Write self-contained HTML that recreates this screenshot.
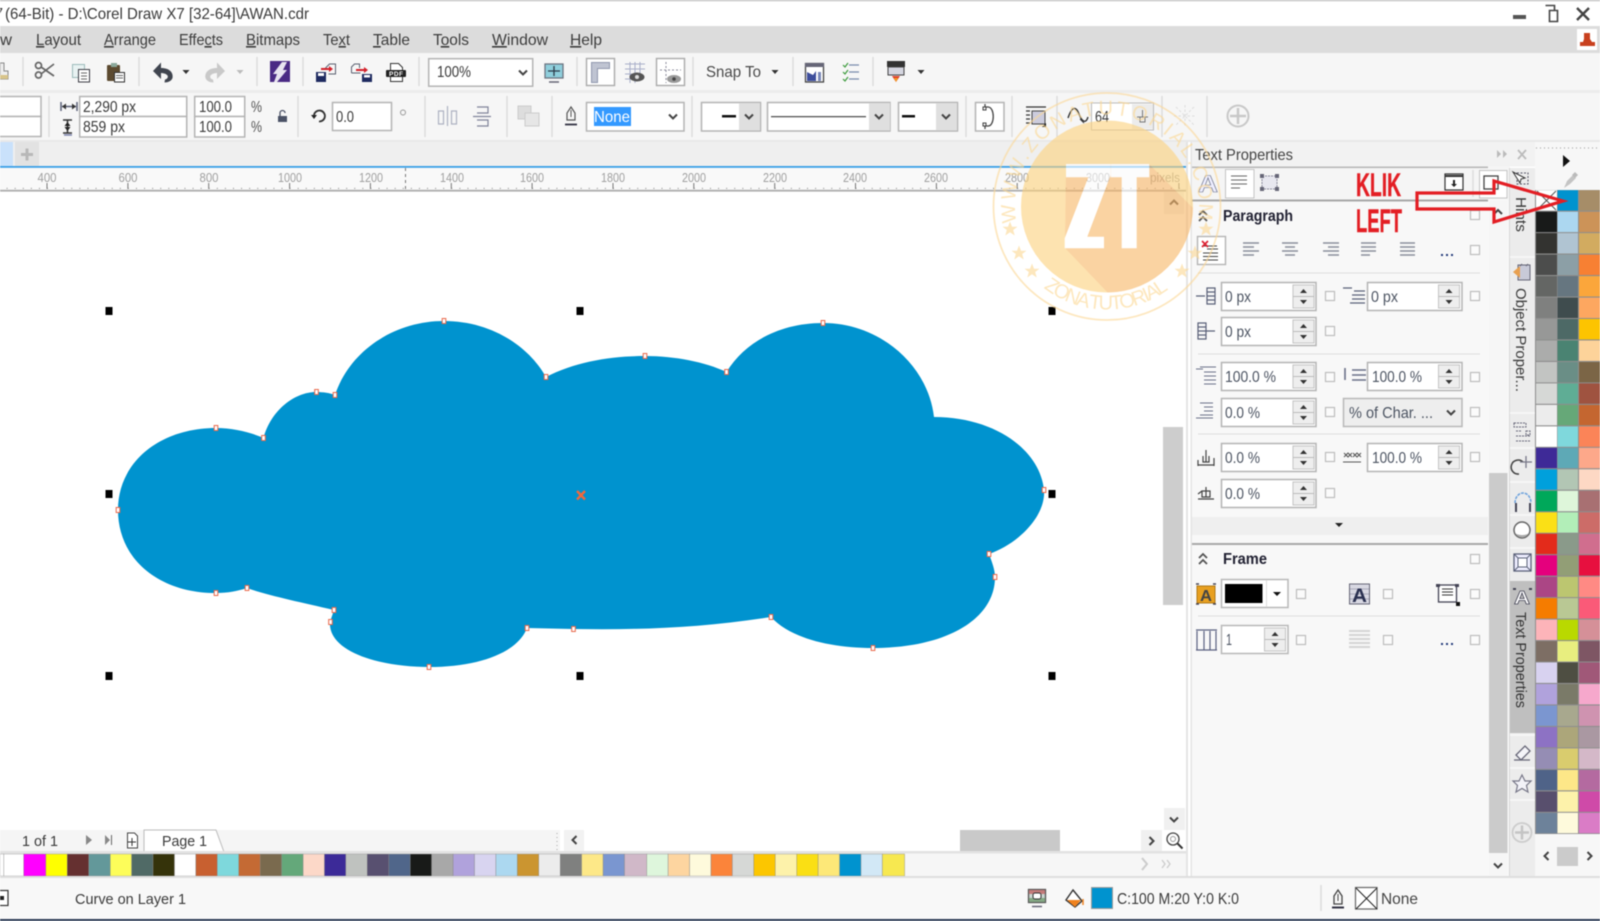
<!DOCTYPE html>
<html><head><meta charset="utf-8"><title>CorelDRAW X7</title>
<style>
html,body{margin:0;padding:0;background:#fff;width:1600px;height:921px;overflow:hidden}
svg{display:block;filter:blur(.45px)}
text{font-family:"Liberation Sans",sans-serif;fill:#3a3a3a;font-size:15px}
.m text{font-size:16px;fill:#3c3c3c}
.r text{font-size:13px;fill:#a0a0a0;text-anchor:middle}
.i{fill:#fff;stroke:#b4b4b4;stroke-width:1.5}
.s{stroke:#dcdcdc;stroke-width:1.5}
.v text{font-size:16px;fill:#4c5462}
</style></head><body>
<svg xmlns="http://www.w3.org/2000/svg" width="1600" height="921" viewBox="0 0 1600 921">
<defs>
<rect id="ck" x="-4.5" y="-4.5" width="9" height="9" fill="#fbfbfb" stroke="#bdbdbd" stroke-width="1.2"/>
<g id="sp"><rect width="21" height="23" fill="#eee" stroke="#c4c4c4"/><path d="M0,11.5H21" stroke="#bbb"/><path d="M10.5,4l3.500,4h-7zM10.5,19l-3.500,-4h7z" fill="#333"/></g>
<path id="ch" d="M-4,-2.5L0,1.5L4,-2.5" fill="none" stroke="#444" stroke-width="2"/>
<path id="dd" d="M-3.5,-2H3.5L0,2z" fill="#333"/>
<path id="und" d="M153,71L161,62.5V68C170,68 173.5,73 172.5,78C171.5,81 168,82.5 164.5,82.5L165,79.5C168,79 168.5,76 167,75C165.5,73.5 163,73 161,73V79Z"/>
<polygon id="st" points="0,-7.5 2,-2.3 7.5,-2.3 3.2,1 4.7,6.5 0,3.3 -4.7,6.5 -3.2,1 -7.5,-2.3 -2,-2.3" fill="#fcd892"/>
<g id="al"><path d="M0,0H16M0,4H11M0,8H16M0,12H11" stroke="#8a8f9c" stroke-width="1.4"/></g>
<g id="node"><rect x="-1.8" y="-2.5" width="3.6" height="5" fill="#fff" stroke="#e8684a" stroke-width="1"/></g>
<clipPath id="cc"><circle cx="1107" cy="206.5" r="86"/></clipPath>
</defs>

<!-- chrome backgrounds -->
<rect width="1600" height="921" fill="#fff"/>
<rect width="1600" height="1.2" fill="#bcbcbc"/>
<rect y="26" width="1600" height="27" fill="#dcdcdc"/>
<rect y="53" width="1600" height="37" fill="#f6f6f6"/>
<rect y="90" width="1600" height="3" fill="#ececec"/>
<rect y="93" width="1600" height="47" fill="#f6f6f6"/>
<rect y="140" width="1600" height="2.5" fill="#e8e8e8"/>
<rect y="142" width="1187" height="25" fill="#efefef"/>
<rect y="142" width="13" height="24.500" fill="#c9e1fb"/>
<rect x="15" y="142" width="24" height="24.500" fill="#e2e2e2"/>
<path d="M21,154.500H33M27,148.500V160.500" stroke="#b8b8b8" stroke-width="3"/>
<rect y="166" width="1187" height="1.800" fill="#3a9fe6"/>
<rect y="168" width="1187" height="22" fill="#f9f9f9"/>
<rect y="189.800" width="1187" height="1.800" fill="#adadad"/>

<!-- title bar -->
<text x="-5" y="19" style="font-size:16px" textLength="8" lengthAdjust="spacingAndGlyphs">7</text>
<text x="5" y="19" style="font-size:16px" textLength="304" lengthAdjust="spacingAndGlyphs">(64-Bit) - D:\Corel Draw X7 [32-64]\AWAN.cdr</text>
<rect x="1513" y="15" width="13" height="4" fill="#555"/>
<path d="M1545.500,5.500h9v5M1549.500,10.500h8v11h-8z" fill="none" stroke="#444" stroke-width="1.600"/>
<path d="M1577,8L1589,20M1589,8L1577,20" stroke="#444" stroke-width="2.400"/>

<!-- menu -->
<g class="m">
<text x="0" y="45" textLength="12" lengthAdjust="spacingAndGlyphs">w</text>
<text x="36" y="45" textLength="45" lengthAdjust="spacingAndGlyphs"><tspan text-decoration="underline">L</tspan>ayout</text>
<text x="104" y="45" textLength="52" lengthAdjust="spacingAndGlyphs"><tspan text-decoration="underline">A</tspan>rrange</text>
<text x="179" y="45" textLength="44" lengthAdjust="spacingAndGlyphs">Effe<tspan text-decoration="underline">c</tspan>ts</text>
<text x="246" y="45" textLength="54" lengthAdjust="spacingAndGlyphs"><tspan text-decoration="underline">B</tspan>itmaps</text>
<text x="323" y="45" textLength="27" lengthAdjust="spacingAndGlyphs">Te<tspan text-decoration="underline">x</tspan>t</text>
<text x="373" y="45" textLength="37" lengthAdjust="spacingAndGlyphs"><tspan text-decoration="underline">T</tspan>able</text>
<text x="433" y="45" textLength="36" lengthAdjust="spacingAndGlyphs">T<tspan text-decoration="underline">o</tspan>ols</text>
<text x="492" y="45" textLength="56" lengthAdjust="spacingAndGlyphs"><tspan text-decoration="underline">W</tspan>indow</text>
<text x="570" y="45" textLength="32" lengthAdjust="spacingAndGlyphs"><tspan text-decoration="underline">H</tspan>elp</text>
</g>
<rect x="1577" y="29" width="20" height="21" fill="#fff"/>
<path d="M1584,33h6v6l2,3h3v4h-15v-4h3l1,-3z" fill="#c8401e"/>

<!-- toolbar separators -->
<path class="s" d="M23,57V86M139,57V86M257,57V86M303,57V86M419,57V86M577,57V86M693,57V86M793,57V86M873,57V86"/>
<path d="M0,63h4v8h4v8h-8z" fill="#eee" stroke="#888"/><rect y="75" width="8" height="4" fill="#d8c48a"/>
<!-- scissors -->
<g fill="none" stroke="#666" stroke-width="1.700"><circle cx="38.500" cy="65.500" r="3"/><circle cx="38.500" cy="75" r="3"/><path d="M41,67L54,76M41,74L54,64"/></g>
<!-- copy -->
<rect x="72.500" y="64.500" width="12" height="13" fill="#e8f2f2" stroke="#9cbaba"/><rect x="78.500" y="69.500" width="11" height="12.500" fill="#fff" stroke="#3c3c44"/><path d="M81,73h6M81,76h6M81,79h6" stroke="#666"/>
<!-- paste -->
<rect x="107" y="65" width="13" height="16" rx="1" fill="#5c4a30"/><rect x="111" y="63" width="6" height="4" fill="#8aa89a"/><rect x="114.500" y="72.500" width="10" height="9.500" fill="#fff" stroke="#333"/><path d="M116,75.500h7M116,78h7" stroke="#666"/>
<!-- undo redo -->
<use href="#und" fill="#40454f"/>
<use href="#dd" x="186" y="72"/>
<use href="#und" fill="#c9c9c9" transform="translate(378,0) scale(-1,1)"/>
<use href="#dd" x="240" y="72" opacity=".3"/>
<!-- connect -->
<rect x="270" y="61" width="20" height="21" fill="#4a2a84"/><path d="M282,62h5l-4,8h4l-10,12h-3l3,-8h-4z" fill="#e8e4f0"/>
<!-- import export pdf -->
<path d="M325.500,68l4,-4h6v10h-7" fill="none" stroke="#5a6070"/><path d="M321,69h8" stroke="#d2202a" stroke-width="2"/><path d="M329,66l4,3l-4,3z" fill="#d2202a"/><rect x="316" y="72" width="10" height="10" fill="#1e2a60"/><rect x="318" y="73" width="6" height="3" fill="#fff"/>
<path d="M351.500,73v-6l3,-3h5v4" fill="none" stroke="#5a6070"/><path d="M351.500,73h9" stroke="#5a6070"/><path d="M356,70h8" stroke="#d2202a" stroke-width="2"/><path d="M364,67l4,3l-4,3z" fill="#d2202a"/><rect x="362" y="74" width="10" height="8" fill="#1e2a60"/><rect x="364" y="75" width="6" height="2.500" fill="#fff"/>
<path d="M390.500,63.500h8l4,4v14h-12z" fill="#fff" stroke="#333"/><rect x="386" y="70" width="20" height="7" rx="1" fill="#222"/><text x="389" y="76" style="font-size:6.500px;fill:#fff;font-weight:bold" textLength="14">PDF</text>
<!-- zoom combobox -->
<rect class="i" x="428.700" y="58.700" width="104" height="27.500"/>
<text x="437" y="77" style="font-size:16px" textLength="34" lengthAdjust="spacingAndGlyphs">100%</text>
<use href="#ch" x="523" y="73"/>
<rect x="545" y="64" width="18" height="14" fill="#8fcfdc" stroke="#6c7480" stroke-width="1.300"/><path d="M548,71h12M554,66v10" stroke="#2c3a48" stroke-width="1.300"/><path d="M549,82h10" stroke="#667" stroke-width="1.500"/>
<!-- view toggles -->
<rect x="586.500" y="58.500" width="28" height="27" fill="#fff" stroke="#aaa" stroke-width="1.400"/>
<path d="M591.500,62.500h18v6h-12v14h-6z" fill="#bfc4d2" stroke="#9098ae"/>
<path d="M625,64H645M625,69H645M625,74H640M625,79H636M630,62V83M635,62V83M640,62V76" stroke="#a8aec8"/><ellipse cx="637" cy="77" rx="7.500" ry="4.500" fill="#555"/><circle cx="637" cy="77" r="2" fill="#ddd"/>
<rect x="656.500" y="58.500" width="28" height="27" fill="#fff" stroke="#aaa" stroke-width="1.400"/>
<path d="M666,62V83M660,70H681" stroke="#889" stroke-dasharray="2 2"/><ellipse cx="674" cy="79" rx="7" ry="4" fill="#999"/><circle cx="674" cy="79" r="1.800" fill="#444"/>
<text x="706" y="77" style="font-size:16px;fill:#4a4a4a" textLength="55" lengthAdjust="spacingAndGlyphs">Snap To</text>
<use href="#dd" x="775" y="72"/>
<rect x="805.500" y="63.500" width="18" height="18.500" fill="#fff" stroke="#444" stroke-width="1.300"/><rect x="805" y="63" width="19" height="4" fill="#667"/><path d="M807,81v-9l6,3l3,-4v10z" fill="#3e4e9c"/><path d="M818,72h3v9h-3" fill="#7a88b8"/>
<path d="M849,65h10M849,72h10M849,79h10" stroke="#7a8aac" stroke-width="1.300"/><path d="M843,65l2,2l3,-4M843,72l2,2l3,-4M843,79l2,2l3,-4" stroke="#3b9a3b" fill="none" stroke-width="1.200"/>
<rect x="887" y="61" width="18" height="6" fill="#333"/><rect x="888" y="67" width="16" height="8" fill="#d5d6e0" stroke="#444"/><path d="M892,76h8l-4,6z" fill="#e0402a"/><path d="M894,78h4l-2,4z" fill="#f2a020"/>
<use href="#dd" x="921" y="72"/>

<!-- prop bar -->
<path class="s" d="M49,96V137M298,96V137M425,96V137M507,96V137M552,96V137M692,96V137M966,96V137M1012,96V137M1057,96V137M1162,96V137M1207,96V137"/>
<rect class="i" x="-2" y="96.500" width="43" height="20"/><rect class="i" x="-2" y="116.500" width="43" height="20"/>
<path d="M61,102v9M77,102v9M62,106.500H76" stroke="#5a6078" stroke-width="1.500"/><path d="M62,106.500l4,-3v6zM76,106.500l-4,-3v6z" fill="#333"/>
<path d="M63,120h9M63,133h9M67.500,120v13" stroke="#333" stroke-width="1.500"/><path d="M67.500,122l-3,4h6zM67.500,131l-3,-4h6z" fill="#222"/><path d="M64,135h8" stroke="#8088b0" stroke-width="1.500"/>
<rect class="i" x="79.700" y="96.500" width="107" height="20"/><rect class="i" x="79.700" y="116.500" width="107" height="20.500"/>
<rect class="i" x="194.700" y="96.500" width="50" height="20"/><rect class="i" x="194.700" y="116.500" width="50" height="20.500"/>
<text x="83" y="112" style="font-size:16px" textLength="53" lengthAdjust="spacingAndGlyphs">2,290 px</text>
<text x="83" y="132" style="font-size:16px" textLength="42" lengthAdjust="spacingAndGlyphs">859 px</text>
<text x="199" y="112" style="font-size:16px" textLength="33" lengthAdjust="spacingAndGlyphs">100.0</text>
<text x="199" y="132" style="font-size:16px" textLength="33" lengthAdjust="spacingAndGlyphs">100.0</text>
<text x="251" y="112" style="fill:#555;font-size:16px" textLength="11" lengthAdjust="spacingAndGlyphs">%</text>
<text x="251" y="132" style="fill:#555;font-size:16px" textLength="11" lengthAdjust="spacingAndGlyphs">%</text>
<path d="M278,116h9v6h-9z" fill="#4b5266"/><path d="M280,116v-3a2.500,2.500 0 0 1 5,0" stroke="#4b5266" fill="none" stroke-width="1.300"/>
<path d="M314,115a5.500,5.500 0 1 1 5,6.500" fill="none" stroke="#333" stroke-width="1.800"/><path d="M311,115h6l-3,4z" fill="#222"/>
<rect class="i" x="332.500" y="102.500" width="59" height="28"/>
<text x="336" y="122" style="font-size:16px" textLength="18" lengthAdjust="spacingAndGlyphs">0.0</text>
<circle cx="403" cy="112.500" r="2.500" fill="none" stroke="#999"/>
<path d="M438.500,111h5v13h-5zM451.500,111h5v13h-5zM447.500,106v20" fill="none" stroke="#aeb2c2" stroke-width="1.200"/>
<path d="M477,107h11v6h-11M477,120h11v6h-11M473,116.500H491" fill="none" stroke="#80849a" stroke-width="1.200"/>
<rect x="518" y="106" width="13" height="13" fill="#ddd" stroke="#ccc"/><rect x="525" y="113" width="14" height="13" fill="#e6e6e6" stroke="#ccc"/>
<path d="M571,107l4,6v7h-8v-7z" fill="none" stroke="#555" stroke-width="1.200"/><path d="M571,110v7" stroke="#555"/><path d="M565,124.500h12" stroke="#334" stroke-width="1.800"/>
<rect class="i" x="586.500" y="102.500" width="97.500" height="28.500"/>
<rect x="594" y="107" width="37" height="19" fill="#3399ff"/>
<text x="594" y="122" style="font-size:16px;fill:#fff" textLength="36" lengthAdjust="spacingAndGlyphs">None</text>
<use href="#ch" x="673" y="117"/>
<rect class="i" x="701.500" y="102.500" width="59" height="28.500"/><rect x="739" y="103" width="21" height="27.500" fill="#dfdfdf"/><rect x="722" y="115" width="14" height="2.500" fill="#111"/><use href="#ch" x="749" y="117"/>
<rect class="i" x="767.500" y="102.500" width="122.500" height="28.500"/><rect x="869" y="103" width="21" height="27.500" fill="#dfdfdf"/><rect x="771" y="116" width="95" height="1.300" fill="#555"/><use href="#ch" x="879" y="117"/>
<rect class="i" x="898.500" y="102.500" width="59" height="28.500"/><rect x="936" y="103" width="21" height="27.500" fill="#dfdfdf"/><rect x="902" y="115" width="13" height="2.500" fill="#111"/><use href="#ch" x="946" y="117"/>
<rect class="i" x="975.500" y="102.500" width="28.500" height="28.500"/><path d="M985,107h3c7,0 7,19 0,19h-3M985,104v5M985,124v5" fill="none" stroke="#444" stroke-width="1.300"/><rect x="983" y="107" width="3" height="3" fill="#eee" stroke="#444"/><rect x="983" y="123" width="3" height="3" fill="#eee" stroke="#444"/>
<path d="M1026,107H1046M1026,111h4M1026,115h4M1026,119h4M1026,123h4" stroke="#333" stroke-width="1.200"/><rect x="1032" y="111" width="13" height="13" fill="#ccd" stroke="#444"/><path d="M1046,127v-4l-4,4z" fill="#111"/>
<path d="M1068,118c4,-12 8,-12 11,-4s7,10 9,3" fill="none" stroke="#333" stroke-width="1.400"/><path d="M1080,119l4,4" stroke="#333"/>
<rect x="1091.500" y="103" width="62" height="27" fill="#fff" stroke="#bbb"/><rect x="1132" y="104" width="21" height="25" fill="#ececec"/><path d="M1137,117h11M1142.500,110v7M1140,117v5h5v-5" fill="none" stroke="#777"/>
<text x="1095" y="122" textLength="14" lengthAdjust="spacingAndGlyphs" style="font-size:16px">64</text>
<path d="M1176,107l18,18M1194,107l-18,18M1185,105v22M1174,116h22" stroke="#ddd" stroke-dasharray="2.500 2"/>
<circle cx="1238" cy="116" r="10.500" fill="none" stroke="#c8c8c8" stroke-width="2"/><path d="M1230,116h16M1238,108v16" stroke="#c8c8c8" stroke-width="2.500"/>

<!-- ruler -->
<line x1="6.600" x2="1186" y1="188.400" y2="188.400" stroke="#888" stroke-dasharray="1 7.085"/>
<path d="M47,183v6M127.900,183v6M208.700,183v6M289.600,183v6M370.400,183v6M451.300,183v6M532.100,183v6M613,183v6M693.800,183v6M774.700,183v6M855.500,183v6M936.400,183v6M1017.200,183v6M1098.100,183v6M1178.900,183v6" stroke="#777"/>
<path d="M405.500,168V190" stroke="#777" stroke-dasharray="3 3"/>
<g class="r">
<text x="47" y="182" textLength="19" lengthAdjust="spacingAndGlyphs">400</text><text x="128" y="182" textLength="19" lengthAdjust="spacingAndGlyphs">600</text><text x="209" y="182" textLength="19" lengthAdjust="spacingAndGlyphs">800</text><text x="290" y="182" textLength="24" lengthAdjust="spacingAndGlyphs">1000</text><text x="371" y="182" textLength="24" lengthAdjust="spacingAndGlyphs">1200</text><text x="452" y="182" textLength="24" lengthAdjust="spacingAndGlyphs">1400</text><text x="532" y="182" textLength="24" lengthAdjust="spacingAndGlyphs">1600</text><text x="613" y="182" textLength="24" lengthAdjust="spacingAndGlyphs">1800</text><text x="694" y="182" textLength="24" lengthAdjust="spacingAndGlyphs">2000</text><text x="775" y="182" textLength="24" lengthAdjust="spacingAndGlyphs">2200</text><text x="855" y="182" textLength="24" lengthAdjust="spacingAndGlyphs">2400</text><text x="936" y="182" textLength="24" lengthAdjust="spacingAndGlyphs">2600</text><text x="1017" y="182" textLength="24" lengthAdjust="spacingAndGlyphs">2800</text><text x="1098" y="182" textLength="24" lengthAdjust="spacingAndGlyphs">3000</text><text x="1165" y="182" textLength="30" lengthAdjust="spacingAndGlyphs">pixels</text>
</g>

<!-- cloud -->
<path fill="#0093cf" d="M444,321C490,321 528,345 546,377C575,362 610,356 645,356C675,356 705,362 726.500,372C745,342 780,323 823,323C880,323 928,365 934,417C995,417 1040,450 1044,490C1046,515 1020,543 989,554C992,562 995,570 995,577C995,620 945,648 873,648C830,648 790,638 771,617C700,628 640,630 573,629L527,628C518,652 480,667 429,667C380,667 328,652 330,622L334,610C300,602 270,596 247,588C238,591 228,593 216,593C160,593 118,560 118,510C118,462 160,428 216,428C233,428 250,432 263.500,438C271,410 295,392 316,392C323,392 330,393 335,395C350,350 395,321 444,321Z"/>
<g>
<use href="#node" x="444" y="321"/><use href="#node" x="546" y="377"/><use href="#node" x="645" y="356"/><use href="#node" x="726.500" y="372"/><use href="#node" x="823" y="323"/><use href="#node" x="1044" y="490"/><use href="#node" x="989" y="554"/><use href="#node" x="995" y="577"/><use href="#node" x="873" y="648"/><use href="#node" x="771" y="617"/><use href="#node" x="573.500" y="629"/><use href="#node" x="527" y="628"/><use href="#node" x="429" y="667"/><use href="#node" x="330.500" y="622"/><use href="#node" x="334" y="610"/><use href="#node" x="247" y="588"/><use href="#node" x="216" y="593"/><use href="#node" x="118" y="510"/><use href="#node" x="216" y="428"/><use href="#node" x="263.500" y="438"/><use href="#node" x="316.500" y="392"/><use href="#node" x="335" y="395"/>
</g>
<path d="M577,491l8,8.500M585,491l-8,8.500" stroke="#f0683c" stroke-width="2.400"/>
<g fill="#000"><rect x="105.500" y="307" width="7" height="8"/><rect x="576.500" y="307" width="7" height="8"/><rect x="1048.500" y="307" width="7" height="8"/><rect x="105.500" y="490" width="7" height="8"/><rect x="1048.500" y="490" width="7" height="8"/><rect x="105.500" y="672" width="7" height="8"/><rect x="576.500" y="672" width="7" height="8"/><rect x="1048.500" y="672" width="7" height="8"/></g>

<!-- canvas scrollbars -->
<rect x="1164" y="192" width="20" height="22" fill="#f0f0f0"/><use href="#ch" x="1174" y="204" transform="rotate(180 1174 203)"/>
<rect x="1163" y="427" width="20" height="178" fill="#cdcdcd"/>
<rect x="1164" y="808" width="21" height="22" fill="#f0f0f0"/><use href="#ch" x="1174" y="820"/>

<!-- page bar -->
<rect y="830" width="560" height="21" fill="#f5f5f5"/>
<text x="22" y="846" textLength="36" lengthAdjust="spacingAndGlyphs">1 of 1</text>
<path d="M86,835l6,5l-6,5zM105,835l5,5l-5,5z" fill="#888"/><path d="M111.500,835v10" stroke="#666"/>
<path d="M127.500,833h7l3,3v12h-10z" fill="#fff" stroke="#444"/><path d="M132,838v8M128,842h8" stroke="#333"/>
<path d="M144,852V830H216l8,22" fill="#fff" stroke="#bbb"/>
<text x="162" y="846" textLength="45" lengthAdjust="spacingAndGlyphs">Page 1</text>
<path d="M557,833v17" stroke="#aaa" stroke-dasharray="1 3"/>
<rect x="564" y="830" width="20" height="21" fill="#f2f2f2"/><use href="#ch" x="574" y="840" transform="rotate(90 574 840)"/>
<rect x="960" y="830" width="100" height="21" fill="#c9c9c9"/>
<rect x="1141" y="830" width="21" height="21" fill="#f0f0f0"/><use href="#ch" x="1152" y="841" transform="rotate(-90 1152 841)"/>
<circle cx="1173" cy="839" r="6" fill="#fff" stroke="#444" stroke-width="1.300"/><circle cx="1173" cy="839" r="2.500" fill="none" stroke="#999"/><path d="M1177.500,843.500l5,5" stroke="#333" stroke-width="2"/>

<!-- colour bar -->
<rect y="851" width="1187" height="2.500" fill="#e2e2e2"/>
<rect y="853.500" width="1187" height="22.500" fill="#f6f6f6"/>
<g stroke="#888" stroke-width=".4">
<rect x="0" y="854" width="3.800" height="22" fill="#fff"/><rect x="3.800" y="854" width="20" height="22" fill="#fff"/><rect x="23.700" y="854" width="22.200" height="22" fill="#ff00ff"/><rect x="45.900" y="854" width="21.500" height="22" fill="#ffff00"/><rect x="67.300" y="854" width="21.500" height="22" fill="#653030"/><rect x="88.800" y="854" width="21.400" height="22" fill="#63989a"/><rect x="110.200" y="854" width="21.400" height="22" fill="#fdfd5a"/><rect x="131.600" y="854" width="21.400" height="22" fill="#506a66"/><rect x="153" y="854" width="21.500" height="22" fill="#35330a"/><rect x="174.500" y="854" width="21.400" height="22" fill="#fff"/><rect x="195.900" y="854" width="21.400" height="22" fill="#c86030"/><rect x="217.300" y="854" width="21.500" height="22" fill="#7ed8dc"/><rect x="238.800" y="854" width="21.400" height="22" fill="#c46a34"/><rect x="260.200" y="854" width="21.400" height="22" fill="#7a6a4e"/><rect x="281.600" y="854" width="21.500" height="22" fill="#64a87a"/><rect x="303.100" y="854" width="21.400" height="22" fill="#fcd8c8"/><rect x="324.500" y="854" width="21.400" height="22" fill="#3c2a98"/><rect x="345.900" y="854" width="21.400" height="22" fill="#bfc2bf"/><rect x="367.300" y="854" width="21.500" height="22" fill="#585070"/><rect x="388.800" y="854" width="21.400" height="22" fill="#50668a"/><rect x="410.200" y="854" width="21.400" height="22" fill="#181a18"/><rect x="431.600" y="854" width="21.500" height="22" fill="#a8a8a8"/><rect x="453.100" y="854" width="21.400" height="22" fill="#b0a2dc"/><rect x="474.500" y="854" width="21.400" height="22" fill="#d8d4f0"/><rect x="495.900" y="854" width="21.500" height="22" fill="#acd8f0"/><rect x="517.400" y="854" width="21.400" height="22" fill="#cb9530"/><rect x="538.800" y="854" width="21.400" height="22" fill="#ececec"/><rect x="560.200" y="854" width="21.400" height="22" fill="#7f807f"/><rect x="581.600" y="854" width="21.500" height="22" fill="#fde888"/><rect x="603.100" y="854" width="21.400" height="22" fill="#7a96d0"/><rect x="624.500" y="854" width="22.200" height="22" fill="#d0b8c8"/><rect x="646.700" y="854" width="21.400" height="22" fill="#def6dc"/><rect x="668.100" y="854" width="21.500" height="22" fill="#fdd5a0"/><rect x="689.600" y="854" width="21.400" height="22" fill="#fefadc"/><rect x="711" y="854" width="21.400" height="22" fill="#fb843a"/><rect x="732.400" y="854" width="21.400" height="22" fill="#d6d8d6"/><rect x="753.800" y="854" width="21.500" height="22" fill="#fcc600"/><rect x="775.300" y="854" width="21.400" height="22" fill="#fdf2aa"/><rect x="796.700" y="854" width="21.400" height="22" fill="#fadf14"/><rect x="818.100" y="854" width="21.500" height="22" fill="#fde878"/><rect x="839.600" y="854" width="21.400" height="22" fill="#0093cf"/><rect x="861" y="854" width="21.400" height="22" fill="#d2e8f6"/><rect x="882.400" y="854" width="22.200" height="22" fill="#f7e850"/>
</g>
<path d="M1142,858l5,6l-5,6" fill="none" stroke="#ccc" stroke-width="2"/>
<path d="M1162,860l3,4l-3,4M1167,860l3,4l-3,4" fill="none" stroke="#ccc" stroke-width="1.300"/>

<!-- status -->
<rect y="876" width="1600" height="43" fill="#f8f8f8"/>
<rect y="876" width="1600" height="2" fill="#dedede"/>
<rect y="919" width="1600" height="2" fill="#2b3a55"/>
<rect x="-3" y="890.500" width="11" height="15" fill="#fff" stroke="#333" stroke-width="1.200"/><rect x="0" y="896" width="4" height="4" fill="#222"/>
<text x="75" y="904" textLength="111" lengthAdjust="spacingAndGlyphs">Curve on Layer 1</text>
<rect x="1028.500" y="889.500" width="17" height="13" fill="#c9d5d0" stroke="#555" stroke-width="1.300"/><rect x="1029" y="890" width="16" height="4" fill="#c47b7b"/><rect x="1029" y="898" width="16" height="4" fill="#84a884"/><rect x="1033" y="893" width="8" height="6" rx="2" fill="#fff" stroke="#333"/><path d="M1032,906.500h10" stroke="#667" stroke-width="1.500"/>
<path d="M1073,890l9,11l-7,6l-9,-7z" fill="#fff" stroke="#333" stroke-width="1.400"/><path d="M1067,900h14l-6,7z" fill="#f0821e"/><path d="M1083,899v6" stroke="#f0821e" stroke-width="1.500"/>
<rect x="1091.500" y="887.500" width="21" height="21" fill="#0093cf" stroke="#9a9a9a"/>
<text x="1117" y="904" style="font-size:16px" textLength="122" lengthAdjust="spacingAndGlyphs">C:100 M:20 Y:0 K:0</text>
<path class="s" d="M1321,885V911"/>
<path d="M1338,890l4,6v8h-8v-8z" fill="none" stroke="#444" stroke-width="1.300"/><path d="M1338,894v7" stroke="#444"/><path d="M1332,907.500h12" stroke="#334" stroke-width="2"/>
<rect x="1355.500" y="887.500" width="21.500" height="21.500" fill="#fff" stroke="#666" stroke-width="1.200"/><path d="M1356,888L1377,909M1377,888L1356,909" stroke="#222"/>
<text x="1381" y="904" style="font-size:16px;fill:#444" textLength="37" lengthAdjust="spacingAndGlyphs">None</text>

<!-- panel -->
<rect x="1186" y="142" width="6.500" height="734" fill="#e4e4e4"/><rect x="1188" y="142" width="2.500" height="734" fill="#fff"/>
<rect x="1192" y="142" width="318" height="734" fill="#f8f8f8"/>
<rect x="1192" y="167" width="318" height="33" fill="#f5f5f5"/>
<rect x="1192" y="166.500" width="296" height="1.600" fill="#b8b8b8"/>
<rect x="1192" y="199.500" width="296" height="2" fill="#a8a8a8"/>
<text x="1198" y="192" style="font-size:24px;fill:#eef;stroke:#6a7088;stroke-width:.6;font-weight:bold" textLength="20" lengthAdjust="spacingAndGlyphs">A</text>
<rect x="1225.500" y="169.500" width="28.500" height="28.500" fill="#fff" stroke="#c4c4c4"/>
<path d="M1231,176h16M1231,180h16M1231,184h16M1231,188h9" stroke="#666" stroke-width="1.100"/>
<rect x="1262" y="176" width="15" height="13" fill="#e8e8f0" stroke="#889" stroke-dasharray="2 1"/>
<path d="M1260,174h4v4h-4zM1275,174h4v4h-4zM1260,187h4v4h-4zM1275,187h4v4h-4z" fill="#667"/>
<path d="M1445,174h18v16h-18z" fill="#fff" stroke="#333" stroke-width="1.200"/><path d="M1445,176h18" stroke="#333" stroke-width="2"/><path d="M1454,180v6" stroke="#222" stroke-width="2"/><path d="M1451,184h6l-3,3z" fill="#222"/>
<path class="s" d="M1473,170V197"/>
<rect x="1479.500" y="170.500" width="27.500" height="27.500" fill="#fff" stroke="#c4c4c4"/><rect x="1484" y="176" width="14" height="13" fill="#fff" stroke="#444" stroke-width="1.300"/>

<!-- Paragraph -->
<path d="M1199,215l4,-4l4,4M1199,221l4,-4l4,4" fill="none" stroke="#555" stroke-width="1.800"/>
<text x="1223" y="221" style="font-size:16px;font-weight:bold;fill:#223" textLength="70" lengthAdjust="spacingAndGlyphs">Paragraph</text>
<use href="#ck" x="1475" y="215"/>
<!-- align -->
<rect x="1197.500" y="236.500" width="28" height="28" fill="#fff" stroke="#b4b4b4" stroke-width="1.400"/>
<path d="M1203,246h14M1207,249h11M1203,253h15M1203,256.500h15M1203,260h15" stroke="#444" stroke-width="1.100"/>
<path d="M1202,241l6,6M1208,241l-6,6" stroke="#d23" stroke-width="1.700"/>
<use href="#al" x="1243" y="243"/>
<path d="M1282,243h16M1285,247h10M1282,251h16M1285,255h10M1323,243h16M1328,247h11M1323,251h16M1328,255h11" stroke="#8a8f9c" stroke-width="1.400"/>
<path d="M1361,243h15M1361,247h15M1361,251h15M1361,255h9M1400,243h15M1400,247h15M1400,251h15M1400,255h15" stroke="#8a8f9c" stroke-width="1.400"/>
<path d="M1441,255h2M1446,255h2M1451,255h2" stroke="#223a7a" stroke-width="2"/>
<use href="#ck" x="1475" y="250"/>
<path stroke="#dcdcdc" d="M1198,273H1480M1198,354H1480M1198,434H1480M1198,616H1480"/>
<g class="v">
<!-- row1 -->
<rect class="i" x="1221.500" y="282.500" width="94.500" height="28"/><use href="#sp" x="1293" y="285"/><text x="1225" y="302" textLength="26" lengthAdjust="spacingAndGlyphs">0 px</text><use href="#ck" x="1330" y="296"/>
<rect class="i" x="1367.500" y="282.500" width="94.500" height="28"/><use href="#sp" x="1438.500" y="285"/><text x="1371" y="302" textLength="27" lengthAdjust="spacingAndGlyphs">0 px</text><use href="#ck" x="1475" y="296"/>
<!-- row2 -->
<rect class="i" x="1221.500" y="317.500" width="94.500" height="28"/><use href="#sp" x="1293" y="320"/><text x="1225" y="337" textLength="26" lengthAdjust="spacingAndGlyphs">0 px</text><use href="#ck" x="1330" y="331"/>
<!-- row3 -->
<rect class="i" x="1221.500" y="362.500" width="94.500" height="28"/><use href="#sp" x="1293" y="365"/><text x="1225" y="382" textLength="51" lengthAdjust="spacingAndGlyphs">100.0 %</text><use href="#ck" x="1330" y="377"/>
<rect class="i" x="1367.500" y="362.500" width="94.500" height="28"/><use href="#sp" x="1438.500" y="365"/><text x="1372" y="382" textLength="50" lengthAdjust="spacingAndGlyphs">100.0 %</text><use href="#ck" x="1475" y="377"/>
<!-- row4 -->
<rect class="i" x="1221.500" y="398.500" width="94.500" height="28"/><use href="#sp" x="1293" y="401"/><text x="1225" y="418" textLength="35" lengthAdjust="spacingAndGlyphs">0.0 %</text><use href="#ck" x="1330" y="412"/>
<rect x="1343.500" y="398.500" width="118.500" height="28" fill="#eee" stroke="#b8b8b8" stroke-width="1.500"/><text x="1349" y="418" textLength="84" lengthAdjust="spacingAndGlyphs">% of Char. ...</text><use href="#ch" x="1451" y="413"/><use href="#ck" x="1475" y="412"/>
<!-- row5 -->
<rect class="i" x="1221.500" y="443.500" width="94.500" height="28"/><use href="#sp" x="1293" y="446"/><text x="1225" y="463" textLength="35" lengthAdjust="spacingAndGlyphs">0.0 %</text><use href="#ck" x="1330" y="457"/>
<rect class="i" x="1367.500" y="443.500" width="94.500" height="28"/><use href="#sp" x="1438.500" y="446"/><text x="1372" y="463" textLength="50" lengthAdjust="spacingAndGlyphs">100.0 %</text><use href="#ck" x="1475" y="457"/>
<!-- row6 -->
<rect class="i" x="1221.500" y="479.500" width="94.500" height="28"/><use href="#sp" x="1293" y="482"/><text x="1225" y="499" textLength="35" lengthAdjust="spacingAndGlyphs">0.0 %</text><use href="#ck" x="1330" y="493"/>
</g>
<!-- paragraph row icons -->
<path d="M1196,296h9M1207,288v16h8v-16zM1207,292h8M1207,296h8M1207,300h8" fill="none" stroke="#5a6078" stroke-width="1.200"/>
<path d="M1343,288h9M1354,291h11M1352,295h13M1352,299h13M1350,303h15" fill="none" stroke="#5a6078" stroke-width="1.200"/>
<path d="M1198,323v16h8v-16zM1198,327h8M1198,331h8M1198,335h8M1206,331h9" fill="none" stroke="#5a6078" stroke-width="1.200"/>
<path d="M1196,369h7M1200,367h16M1204,372h12M1204,376h12M1204,380h12M1204,384h12" fill="none" stroke="#6a7088" stroke-width="1.100"/>
<path d="M1345,368v12M1352,370h14M1352,375h14M1352,380h14" fill="none" stroke="#6a7088" stroke-width="1.600"/>
<path d="M1200,403h13M1204,407h9M1204,411h9M1200,415h13M1196,418h17" fill="none" stroke="#6a7088" stroke-width="1.100"/>
<path d="M1198,465h16M1198,460v6M1214,458v8M1203,456v6h6v-6M1206,450v12" fill="none" stroke="#444" stroke-width="1.200"/>
<path d="M1344,453l4,4l4,-4M1353,453l4,4l4,-4M1344,457l4,-4l4,4M1353,457l4,-4l4,4M1343,462h18" fill="none" stroke="#555" stroke-width="1"/>
<path d="M1198,499h16M1202,491h8v6h-8zM1206,487v10M1198,494l4,-3" fill="none" stroke="#444" stroke-width="1.200"/>

<rect x="1192" y="517" width="296" height="18" fill="#efefef"/>
<path d="M1335,523h8l-4,4z" fill="#222"/>
<rect x="1192" y="543" width="296" height="2" fill="#a8a8a8"/>
<!-- Frame -->
<path d="M1199,558l4,-4l4,4M1199,564l4,-4l4,4" fill="none" stroke="#555" stroke-width="1.800"/>
<text x="1223" y="564" style="font-size:16px;font-weight:bold;fill:#223" textLength="44" lengthAdjust="spacingAndGlyphs">Frame</text>
<use href="#ck" x="1475" y="559"/>
<rect x="1197" y="586" width="18" height="17" fill="#e8a020" stroke="#b07818"/>
<text x="1200" y="601" style="font-size:16px;font-weight:bold;fill:#444" textLength="12" lengthAdjust="spacingAndGlyphs">A</text>
<path d="M1196,584h3M1213,584h3M1196,604h3M1213,604h3" stroke="#445" stroke-width="1.500"/>
<rect x="1221.500" y="579.500" width="66.500" height="28" fill="#fff" stroke="#b8b8b8" stroke-width="1.500"/><rect x="1225" y="584" width="37.500" height="19" fill="#000"/><path d="M1266.500,580v27" stroke="#ddd"/><path d="M1273,592h8l-4,4z" fill="#111"/>
<use href="#ck" x="1301" y="594"/>
<rect x="1349.500" y="584" width="20" height="20" fill="#d8d8e2" stroke="#667"/><path d="M1350,589h19M1350,594h19M1350,599h19" stroke="#aab"/>
<text x="1352" y="602" style="font-size:19px;font-weight:bold;fill:#2a3050" textLength="15" lengthAdjust="spacingAndGlyphs">A</text>
<use href="#ck" x="1388" y="594"/>
<rect x="1438.500" y="585" width="18" height="17" fill="#fff" stroke="#445" stroke-width="1.300"/><path d="M1442,589h11M1442,592h11M1442,595h11" stroke="#333"/><path d="M1456,602h4v4h-4z" fill="#111"/><path d="M1436,584h4v3h-4zM1455,584h4v3h-4z" fill="#445"/>
<use href="#ck" x="1475" y="594"/>
<path d="M1197,631V650M1204,631V650M1210,631V650M1216,631V650M1196,630H1217M1196,650H1217" stroke="#5a6080" stroke-width="1.200"/>
<rect x="1221.500" y="625.500" width="66.500" height="28" fill="#fff" stroke="#b8b8b8" stroke-width="1.500"/><use href="#sp" x="1264.500" y="628"/>
<text x="1226" y="645" style="font-size:16px;fill:#4c5462" textLength="6" lengthAdjust="spacingAndGlyphs">1</text>
<use href="#ck" x="1301" y="640"/>
<path d="M1349,631h21M1349,635h21M1349,639h21M1349,643h21M1349,647h21" stroke="#d4d4d4" stroke-width="2"/>
<use href="#ck" x="1388" y="640"/>
<path d="M1441,644h2M1446,644h2M1451,644h2" stroke="#223a7a" stroke-width="2"/>
<use href="#ck" x="1475" y="640"/>

<!-- panel scrollbar -->
<rect x="1489" y="201" width="18.500" height="675" fill="#f6f6f6"/>
<rect x="1489" y="473" width="18.500" height="380" fill="#cbcbcb"/>
<use href="#ch" x="1498" y="866"/>
<path d="M1494,214l4,-4l4,4" fill="none" stroke="#444" stroke-width="2"/>

<!-- docker strip -->
<rect x="1509" y="168" width="26" height="708" fill="#ececec"/>
<rect x="1192" y="142" width="343" height="24.500" fill="#f2f2f2"/>
<text x="1195" y="160" style="font-size:16px;fill:#444" textLength="98" lengthAdjust="spacingAndGlyphs">Text Properties</text>
<path d="M1497,150l4,4l-4,4zM1503,150l4,4l-4,4z" fill="#bbb"/>
<path d="M1518,150l8,9M1526,150l-8,9" stroke="#bbb" stroke-width="1.800"/>
<rect x="1509" y="581" width="26" height="152" fill="#bfbfbf"/>
<path d="M1509,257H1535M1509,413H1535M1509,448H1535M1509,482H1535M1509,515H1535M1509,548H1535M1509,735H1535M1509,768H1535M1509,800H1535" stroke="#fafafa" stroke-width="1.500"/>
<path d="M1509.500,168V876" stroke="#d8d8d8"/>
<rect x="1517" y="173" width="11" height="11" fill="none" stroke="#556" stroke-dasharray="2 1.500"/><path d="M1513,172l7,11l1,-4l4,-1z" fill="#fff" stroke="#333"/>
<text transform="translate(1516,197) rotate(90)" textLength="35" lengthAdjust="spacingAndGlyphs">Hints</text>
<rect x="1518" y="265" width="12" height="15" fill="#c8cad8" stroke="#667"/><path d="M1513,272l7,-6v12z" fill="#e8a050"/><path d="M1520,266l2,-2M1526,266l2,-2" stroke="#667"/>
<text transform="translate(1516,288) rotate(90)" textLength="104" lengthAdjust="spacingAndGlyphs">Object Proper...</text>
<path d="M1514,423h12v4h-12zM1516,431h6M1516,436h14M1516,441h14M1526,431h4v4h-4z" fill="none" stroke="#667" stroke-dasharray="2 1"/>
<path d="M1523,462a7,7 0 1 0 -4,12" fill="none" stroke="#444" stroke-width="1.500"/><path d="M1526,456v12M1520,462h12" stroke="#778" stroke-width="1.300"/>
<path d="M1515,503a8,10 0 0 1 16,0" fill="none" stroke="#6aa0dc" stroke-width="1.500" stroke-dasharray="3 1"/><path d="M1516,503v9M1530,503v9" stroke="#445" stroke-width="2"/>
<circle cx="1522" cy="530" r="8" fill="#fff" stroke="#666" stroke-width="1.500"/><path d="M1515,533a8,8 0 0 0 14,0a8,4 0 0 1 -14,0" fill="#aaa"/>
<rect x="1514" y="554" width="17" height="17" fill="#eef" stroke="#5a6078" stroke-width="1.300"/><rect x="1518" y="558" width="9" height="9" fill="#fff" stroke="#5a6078"/><path d="M1514,554l4,4M1531,554l-4,4M1514,571l4,-4M1531,571l-4,-4" stroke="#5a6078"/>
<text x="1514" y="604" style="font-size:18px;font-weight:bold;fill:#fff;stroke:#445;stroke-width:.7" textLength="16" lengthAdjust="spacingAndGlyphs">A</text>
<path d="M1513,589h19" stroke="#445" stroke-dasharray="3 13" stroke-width="2"/>
<text transform="translate(1516,612) rotate(90)" style="fill:#333" textLength="96" lengthAdjust="spacingAndGlyphs">Text Properties</text>
<path d="M1516,755l9,-9l5,5l-9,9zM1514,760h16" fill="#f4f4f8" stroke="#667" stroke-width="1.300"/>
<polygon points="1522,775 1525,781 1531,781 1526.500,785.500 1528,792 1522,788.500 1516,792 1517.500,785.500 1513,781 1519,781" fill="#f2f2f8" stroke="#778" stroke-width="1.200"/>
<circle cx="1522" cy="832.500" r="9.500" fill="none" stroke="#ccc" stroke-width="1.800"/><path d="M1515,832.500h14M1522,825.500v14" stroke="#c4c4c4" stroke-width="2.500"/>

<!-- palette -->
<rect x="1535" y="142" width="65" height="48" fill="#f7f7f7"/>
<path d="M1536,148H1600" stroke="#999" stroke-dasharray="1 3"/>
<path d="M1563,155l7,6l-7,6z" fill="#111"/>
<path d="M1564,188l3,-7l6,-6l3,3l-6,6z" fill="#c4c4c4"/><path d="M1572,175l3,-3l3,3l-3,3z" fill="#bbb"/>
<rect x="1535" y="190" width="65" height="644" fill="#8e8e8e"/>
<rect x="1535" y="834" width="65" height="42" fill="#f7f7f7"/>
<use href="#ch" x="1546" y="856" transform="rotate(90 1546 856)"/>
<rect x="1557" y="847" width="21" height="19" fill="#cbcbcb"/>
<use href="#ch" x="1590" y="856" transform="rotate(-90 1590 856)"/>

<rect x="1536" y="190.200" width="21" height="20.400" fill="#fff"/><path d="M1537,191L1556,210M1556,191L1537,210" stroke="#555"/><rect x="1557.500" y="190.200" width="20.500" height="20.400" fill="#0093cf"/><rect x="1579" y="190.200" width="21" height="20.400" fill="#a68d68"/>
<rect x="1536" y="211.700" width="21" height="20.400" fill="#181a19"/><rect x="1557.500" y="211.700" width="20.500" height="20.400" fill="#acd7f0"/><rect x="1579" y="211.700" width="21" height="20.400" fill="#cc9358"/>
<rect x="1536" y="233.100" width="21" height="20.400" fill="#333330"/><rect x="1557.500" y="233.100" width="20.500" height="20.400" fill="#b0c4d2"/><rect x="1579" y="233.100" width="21" height="20.400" fill="#d2ab60"/>
<rect x="1536" y="254.600" width="21" height="20.400" fill="#4c4d4c"/><rect x="1557.500" y="254.600" width="20.500" height="20.400" fill="#8c9fa6"/><rect x="1579" y="254.600" width="21" height="20.400" fill="#f78033"/>
<rect x="1536" y="276.100" width="21" height="20.400" fill="#646664"/><rect x="1557.500" y="276.100" width="20.500" height="20.400" fill="#667680"/><rect x="1579" y="276.100" width="21" height="20.400" fill="#fba63b"/>
<rect x="1536" y="297.600" width="21" height="20.400" fill="#7f807f"/><rect x="1557.500" y="297.600" width="20.500" height="20.400" fill="#3f4c4e"/><rect x="1579" y="297.600" width="21" height="20.400" fill="#fda760"/>
<rect x="1536" y="319" width="21" height="20.400" fill="#979897"/><rect x="1557.500" y="319" width="20.500" height="20.400" fill="#4d6966"/><rect x="1579" y="319" width="21" height="20.400" fill="#fdc400"/>
<rect x="1536" y="340.500" width="21" height="20.400" fill="#abacab"/><rect x="1557.500" y="340.500" width="20.500" height="20.400" fill="#4a8372"/><rect x="1579" y="340.500" width="21" height="20.400" fill="#fdd39a"/>
<rect x="1536" y="362" width="21" height="20.400" fill="#c2c4c2"/><rect x="1557.500" y="362" width="20.500" height="20.400" fill="#6a8e86"/><rect x="1579" y="362" width="21" height="20.400" fill="#7b6546"/>
<rect x="1536" y="383.400" width="21" height="20.400" fill="#d6d8d6"/><rect x="1557.500" y="383.400" width="20.500" height="20.400" fill="#5fad95"/><rect x="1579" y="383.400" width="21" height="20.400" fill="#9f5340"/>
<rect x="1536" y="404.900" width="21" height="20.400" fill="#ececec"/><rect x="1557.500" y="404.900" width="20.500" height="20.400" fill="#66a878"/><rect x="1579" y="404.900" width="21" height="20.400" fill="#c46630"/>
<rect x="1536" y="426.400" width="21" height="20.400" fill="#ffffff"/><rect x="1557.500" y="426.400" width="20.500" height="20.400" fill="#7fd8dc"/><rect x="1579" y="426.400" width="21" height="20.400" fill="#fb8458"/>
<rect x="1536" y="447.800" width="21" height="20.400" fill="#3e2a97"/><rect x="1557.500" y="447.800" width="20.500" height="20.400" fill="#5ea9b6"/><rect x="1579" y="447.800" width="21" height="20.400" fill="#fda88a"/>
<rect x="1536" y="469.300" width="21" height="20.400" fill="#00a0dc"/><rect x="1557.500" y="469.300" width="20.500" height="20.400" fill="#b2c6b4"/><rect x="1579" y="469.300" width="21" height="20.400" fill="#fdd8c4"/>
<rect x="1536" y="490.800" width="21" height="20.400" fill="#00a85a"/><rect x="1557.500" y="490.800" width="20.500" height="20.400" fill="#def6da"/><rect x="1579" y="490.800" width="21" height="20.400" fill="#a87072"/>
<rect x="1536" y="512.300" width="21" height="20.400" fill="#fae016"/><rect x="1557.500" y="512.300" width="20.500" height="20.400" fill="#b2eeb8"/><rect x="1579" y="512.300" width="21" height="20.400" fill="#cc6c68"/>
<rect x="1536" y="533.700" width="21" height="20.400" fill="#e32b1b"/><rect x="1557.500" y="533.700" width="20.500" height="20.400" fill="#8a9a8a"/><rect x="1579" y="533.700" width="21" height="20.400" fill="#d06e8e"/>
<rect x="1536" y="555.200" width="21" height="20.400" fill="#e5007d"/><rect x="1557.500" y="555.200" width="20.500" height="20.400" fill="#929e76"/><rect x="1579" y="555.200" width="21" height="20.400" fill="#e7103f"/>
<rect x="1536" y="576.700" width="21" height="20.400" fill="#ab4685"/><rect x="1557.500" y="576.700" width="20.500" height="20.400" fill="#bcc670"/><rect x="1579" y="576.700" width="21" height="20.400" fill="#ff8a84"/>
<rect x="1536" y="598.100" width="21" height="20.400" fill="#f57c00"/><rect x="1557.500" y="598.100" width="20.500" height="20.400" fill="#b9c894"/><rect x="1579" y="598.100" width="21" height="20.400" fill="#fa5a78"/>
<rect x="1536" y="619.600" width="21" height="20.400" fill="#fdb4b9"/><rect x="1557.500" y="619.600" width="20.500" height="20.400" fill="#b9d900"/><rect x="1579" y="619.600" width="21" height="20.400" fill="#d59098"/>
<rect x="1536" y="641.100" width="21" height="20.400" fill="#7d6e64"/><rect x="1557.500" y="641.100" width="20.500" height="20.400" fill="#e8ee7f"/><rect x="1579" y="641.100" width="21" height="20.400" fill="#7e5664"/>
<rect x="1536" y="662.500" width="21" height="20.400" fill="#d8d2f0"/><rect x="1557.500" y="662.500" width="20.500" height="20.400" fill="#4e4e42"/><rect x="1579" y="662.500" width="21" height="20.400" fill="#a05878"/>
<rect x="1536" y="684" width="21" height="20.400" fill="#b0a2dc"/><rect x="1557.500" y="684" width="20.500" height="20.400" fill="#7a7a68"/><rect x="1579" y="684" width="21" height="20.400" fill="#f6a8cc"/>
<rect x="1536" y="705.500" width="21" height="20.400" fill="#7b96d0"/><rect x="1557.500" y="705.500" width="20.500" height="20.400" fill="#a8a88e"/><rect x="1579" y="705.500" width="21" height="20.400" fill="#cf93b0"/>
<rect x="1536" y="727" width="21" height="20.400" fill="#8d72c4"/><rect x="1557.500" y="727" width="20.500" height="20.400" fill="#aca67a"/><rect x="1579" y="727" width="21" height="20.400" fill="#aa98a2"/>
<rect x="1536" y="748.400" width="21" height="20.400" fill="#958db4"/><rect x="1557.500" y="748.400" width="20.500" height="20.400" fill="#d9cc6e"/><rect x="1579" y="748.400" width="21" height="20.400" fill="#d4b8c8"/>
<rect x="1536" y="769.900" width="21" height="20.400" fill="#4f6388"/><rect x="1557.500" y="769.900" width="20.500" height="20.400" fill="#fde788"/><rect x="1579" y="769.900" width="21" height="20.400" fill="#b46aa0"/>
<rect x="1536" y="791.400" width="21" height="20.400" fill="#584f6d"/><rect x="1557.500" y="791.400" width="20.500" height="20.400" fill="#fdf2aa"/><rect x="1579" y="791.400" width="21" height="20.400" fill="#cf4aa8"/>
<rect x="1536" y="812.800" width="21" height="20.400" fill="#6d829a"/><rect x="1557.500" y="812.800" width="20.500" height="20.400" fill="#fefadc"/><rect x="1579" y="812.800" width="21" height="20.400" fill="#da7cc6"/>

<!-- watermark -->
<g opacity=".6">
<circle cx="1107" cy="206.500" r="113.500" fill="none" stroke="#fcd896" stroke-width="1.800"/>
<circle cx="1107" cy="206.500" r="86" fill="#fdd27c"/>
<polygon clip-path="url(#cc)" points="1066,164 1149,164 1205,220 1205,310 1110,295 1065,248" fill="#f8b666"/>
<polygon fill="#fff" points="1066,164 1110.700,164 1110.700,175 1087.300,236.700 1104,236.700 1104,248.300 1064.700,248.300 1064.700,238.300 1088.300,177.300 1066,177.300"/>
<polygon fill="#fff" points="1110.700,164 1149.300,164 1149.300,177.300 1136.700,177.300 1136.700,248.300 1121.700,248.300 1121.700,177.300 1110.700,177.300"/>
<path id="wt" d="M1016.400,222.500A92,92 0 1 1 1197.600,222.500" fill="none"/>
<path id="wb" d="M1043.600,287.700A103,103 0 0 0 1170.400,287.700" fill="none"/>
<text style="font-size:20px;fill:#fcd892"><textPath href="#wt" textLength="318">WWW.ZONATUTORIAL.COM</textPath></text>
<text style="font-size:20px;fill:#fcd892"><textPath href="#wb" textLength="134">ZONA TUTORIAL</textPath></text>
<use href="#st" x="1010" y="229"/><use href="#st" x="1019" y="253"/><use href="#st" x="1032" y="271"/><use href="#st" x="1206" y="229"/><use href="#st" x="1195" y="253"/><use href="#st" x="1182" y="271"/>
</g>

<!-- annotation -->
<polygon points="1417,193 1494,193 1494,181 1563,201 1494,222 1494,209 1417,209" fill="none" stroke="#e31e24" stroke-width="3.200"/>
<text x="1356" y="196" style="font-size:32px;font-weight:bold;fill:#e31e24;stroke:#e31e24;stroke-width:.4" textLength="45" lengthAdjust="spacingAndGlyphs">KLIK</text>
<text x="1356" y="232" style="font-size:32px;font-weight:bold;fill:#e31e24;stroke:#e31e24;stroke-width:.4" textLength="46" lengthAdjust="spacingAndGlyphs">LEFT</text>
</svg>
</body></html>
